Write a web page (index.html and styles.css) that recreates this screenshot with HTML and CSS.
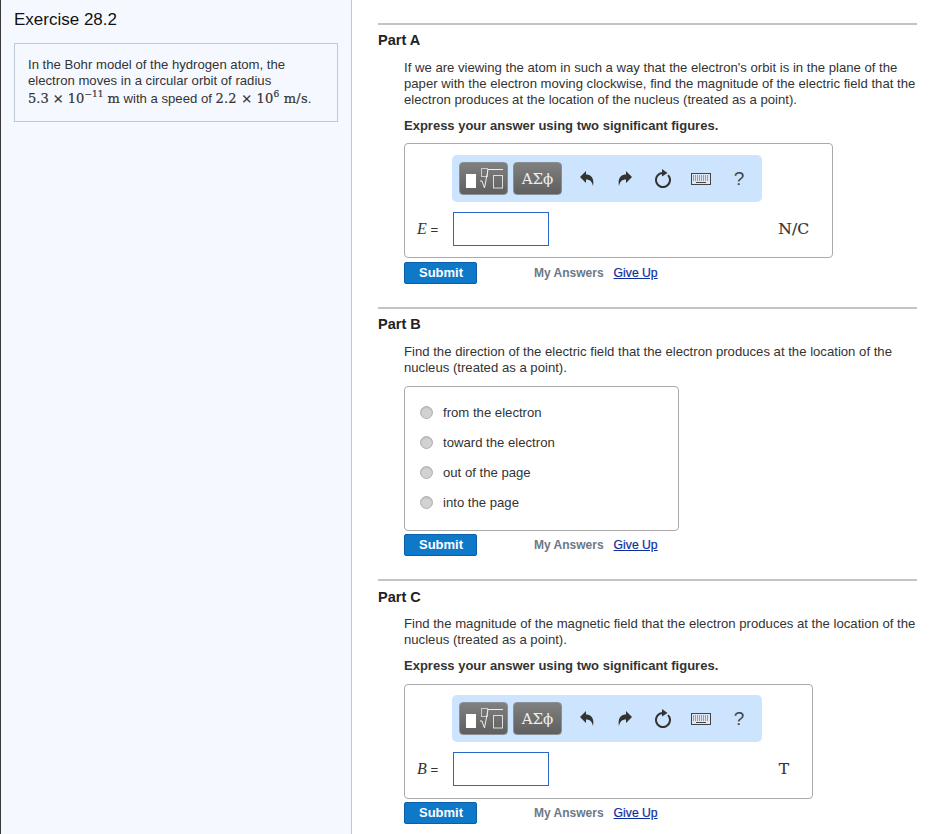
FILE: index.html
```html
<!DOCTYPE html>
<html lang="en">
<head>
<meta charset="utf-8">
<title>Exercise 28.2</title>
<link rel="stylesheet" href="styles.css">
</head>
<body>
<div class="page">
  <aside class="side">
    <h1 class="title">Exercise 28.2</h1>
    <div class="intro">
      <div>In the Bohr model of the hydrogen atom, the</div>
      <div>electron moves in a circular orbit of radius</div>
      <div class="intro-math"><span class="m">5.3 × 10<sup>−11</sup> m</span> with a speed of <span class="m">2.2 × 10<sup>6</sup> m/s</span>.</div>
    </div>
  </aside>
  <main class="main">
    <section class="part part-a">
      <h2 class="part-title">Part A</h2>
      <div class="body">
        <p class="q">If we are viewing the atom in such a way that the electron's orbit is in the plane of the<br>paper with the electron moving clockwise, find the magnitude of the electric field that the<br>electron produces at the location of the nucleus (treated as a point).</p>
        <p class="hint">Express your answer using two significant figures.</p>
        <div class="answer answer-a">
          <div class="toolbar">
            <span class="tbtn">
              <svg width="49" height="33" viewBox="0 0 49 33"><rect x="7" y="12" width="10" height="14" fill="#fff"/><rect x="22.500" y="6.500" width="6" height="8" fill="none" stroke="#ccc"/><path d="M21 19h2l2.500 7 3.500-18.500h15" fill="none" stroke="#eee"/><rect x="34.500" y="13.500" width="9" height="12.500" fill="none" stroke="#ddd"/></svg>
            </span>
            <span class="tbtn tbtn-sym">ΑΣϕ</span>
            <span class="tools">
              <span class="cell"><svg width="14" height="15" viewBox="0 0 14 15"><path d="M0 6L6 0v3.500c5 0 8.500 3.500 7 11.500-1-4.500-3-6.500-7-6.500V12z" fill="#333"/></svg></span>
              <span class="cell"><svg width="14" height="15" viewBox="0 0 14 15"><path d="M14 6L8 0v3.500c-5 0-8.500 3.500-7 11.500 1-4.500 3-6.500 7-6.500V12z" fill="#333"/></svg></span>
              <span class="cell"><svg width="16" height="19" viewBox="0 0 16 19"><path d="M8 4a7 7 0 1 0 5 2.100" fill="none" stroke="#333" stroke-width="2"/><path d="M7 0l5.500 4L7 7.500z" fill="#333"/></svg></span>
              <span class="cell"><svg width="20" height="12" viewBox="0 0 20 12"><rect x=".5" y=".5" width="19" height="11" fill="#dfe8f2" stroke="#444"/><path d="M2 3h16M2 5h16M2 7h16" stroke="#555" stroke-dasharray="1 1"/><path d="M5 9.500h10" stroke="#444"/></svg></span>
              <span class="cell help">?</span>
            </span>
          </div>
          <div class="entry">
            <span class="label"><i>E</i> =</span>
            <span class="input"></span>
            <span class="unit">N/C</span>
          </div>
        </div>
        <div class="actions"><button class="submit">Submit</button><span class="mine">My Answers</span><a class="giveup" href="#">Give Up</a></div>
      </div>
    </section>
    <section class="part part-b">
      <h2 class="part-title">Part B</h2>
      <div class="body">
        <p class="q">Find the direction of the electric field that the electron produces at the location of the<br>nucleus (treated as a point).</p>
        <div class="choices">
          <label class="choice"><span class="radio"></span>from the electron</label>
          <label class="choice"><span class="radio"></span>toward the electron</label>
          <label class="choice"><span class="radio"></span>out of the page</label>
          <label class="choice"><span class="radio"></span>into the page</label>
        </div>
        <div class="actions"><button class="submit">Submit</button><span class="mine">My Answers</span><a class="giveup" href="#">Give Up</a></div>
      </div>
    </section>
    <section class="part part-c">
      <h2 class="part-title">Part C</h2>
      <div class="body">
        <p class="q">Find the magnitude of the magnetic field that the electron produces at the location of the<br>nucleus (treated as a point).</p>
        <p class="hint">Express your answer using two significant figures.</p>
        <div class="answer answer-c">
          <div class="toolbar">
            <span class="tbtn">
              <svg width="49" height="33" viewBox="0 0 49 33"><rect x="7" y="12" width="10" height="14" fill="#fff"/><rect x="22.500" y="6.500" width="6" height="8" fill="none" stroke="#ccc"/><path d="M21 19h2l2.500 7 3.500-18.500h15" fill="none" stroke="#eee"/><rect x="34.500" y="13.500" width="9" height="12.500" fill="none" stroke="#ddd"/></svg>
            </span>
            <span class="tbtn tbtn-sym">ΑΣϕ</span>
            <span class="tools">
              <span class="cell"><svg width="14" height="15" viewBox="0 0 14 15"><path d="M0 6L6 0v3.500c5 0 8.500 3.500 7 11.500-1-4.500-3-6.500-7-6.500V12z" fill="#333"/></svg></span>
              <span class="cell"><svg width="14" height="15" viewBox="0 0 14 15"><path d="M14 6L8 0v3.500c-5 0-8.500 3.500-7 11.500 1-4.500 3-6.500 7-6.500V12z" fill="#333"/></svg></span>
              <span class="cell"><svg width="16" height="19" viewBox="0 0 16 19"><path d="M8 4a7 7 0 1 0 5 2.100" fill="none" stroke="#333" stroke-width="2"/><path d="M7 0l5.500 4L7 7.500z" fill="#333"/></svg></span>
              <span class="cell"><svg width="20" height="12" viewBox="0 0 20 12"><rect x=".5" y=".5" width="19" height="11" fill="#dfe8f2" stroke="#444"/><path d="M2 3h16M2 5h16M2 7h16" stroke="#555" stroke-dasharray="1 1"/><path d="M5 9.500h10" stroke="#444"/></svg></span>
              <span class="cell help">?</span>
            </span>
          </div>
          <div class="entry">
            <span class="label"><i>B</i> =</span>
            <span class="input"></span>
            <span class="unit">T</span>
          </div>
        </div>
        <div class="actions"><button class="submit">Submit</button><span class="mine">My Answers</span><a class="giveup" href="#">Give Up</a></div>
      </div>
    </section>
  </main>
</div>
</body>
</html>
```
FILE: styles.css
```css
* { box-sizing: border-box; }
html, body { margin: 0; height: 100%; overflow: hidden; }
body { background: #fff; color: #333; font-family: "Liberation Sans", Arial, sans-serif; font-size: 13.150px; }
.page { display: flex; height: 834px; width: 937px; }
.side { width: 352px; flex: none; background: #f5f9ff; border-left: 1px solid #3a3a3a; border-right: 1px solid #bcc8d8; padding: 11px 13px 0 13px; }
.title { margin: 0 0 14px; font-weight: 400; font-size: 17px; line-height: 18px; color: #111; }
.intro { width: 324px; height: 79px; border: 1px solid #bccad8; padding: 13px 13px 0; line-height: 16px; }
.intro-math { margin-top: 2px; white-space: nowrap; line-height: 16px; }
.m { font-family: "DejaVu Serif", serif; font-size: 13px; -webkit-text-stroke: .2px #333; }
.m sup { font-size: 9px; line-height: 0; vertical-align: 6px; }
.m + .m { letter-spacing: .2px; }
.main { flex: 1; padding: 23px 20px 0 26px; }
.part { border-top: 2px solid #c4c4c4; }
.part-a { height: 284px; }
.part-b { height: 272px; }
.part-title { margin: 0; padding-top: 8px; font-size: 14.500px; line-height: 15px; font-weight: 700; color: #222; }
.part-c .part-title { padding-top: 9px; }
.body { padding-left: 26px; }
.q { margin: 12px 0 0; line-height: 16px; }
.part-c .q { margin-top: 11px; }
.hint { margin: 10px 0 0; font-size: 13px; font-weight: 700; line-height: 16px; }
.answer { margin-top: 9px; height: 115px; border: 1px solid #aaa; border-radius: 4px; }
.answer-a { width: 429px; }
.answer-c { width: 409px; margin-top: 10px; }
.toolbar { display: flex; align-items: center; width: 310px; height: 47px; margin: 11px 0 0 47px; padding-left: 7px; background: #cde4ff; border-radius: 5px; gap: 5px; }
.answer-c .toolbar { margin-top: 10px; }
.tbtn { display: flex; flex: none; align-items: center; justify-content: center; width: 49px; height: 33px; border: 1px solid #8a8f96; border-radius: 4px; background: linear-gradient(#808080, #5f5f5f); color: #eee; }
.tbtn svg { flex: none; margin: -1px; }
.tbtn-sym { font-family: "DejaVu Serif", serif; font-size: 15px; }
.tools { display: flex; align-items: center; margin-left: 1px; }
.cell { display: flex; align-items: center; justify-content: center; width: 38px; height: 24px; }
.help { font-size: 19px; color: #444; }
.entry { display: flex; align-items: center; margin-top: 10px; height: 33px; }
.label { width: 48px; padding-left: 12px; font-size: 13.150px; }
.label i { font-family: "Liberation Serif", serif; font-size: 16px; }
.input { width: 96px; height: 34px; border: 1px solid #2b66c9; background: #fff; }
.unit { margin-left: auto; padding-right: 23px; font-family: "DejaVu Serif", serif; font-size: 15.500px; -webkit-text-stroke: .2px #333; }
.actions { display: flex; align-items: center; margin-top: 4px; height: 22px; }
.part-b .actions, .part-c .actions { margin-top: 3px; }
.submit { width: 73px; height: 22px; padding: 0 0 2px 1px; border: 1px solid #0a5fa8; border-radius: 2px; background: #0e79c9; color: #fff; font: 700 13px "Liberation Sans", Arial, sans-serif; }
.mine { margin-left: 57px; font-size: 12px; font-weight: 700; color: #6d7885; }
.giveup { margin-left: 10px; color: #0a2e9e; text-decoration: underline; font-size: 12.200px; -webkit-text-stroke: .2px #0a2e9e; }
.choices { margin-top: 10px; width: 275px; height: 145px; border: 1px solid #aaa; border-radius: 4px; padding: 10px 0 0 15px; }
.choice { display: flex; align-items: center; height: 30px; }
.radio { width: 13px; height: 13px; margin-right: 10px; border-radius: 50%; background: #d2d2d2; border: 1px solid #b0b0b0; box-shadow: inset 0 1px 1px #bbb; }
```
